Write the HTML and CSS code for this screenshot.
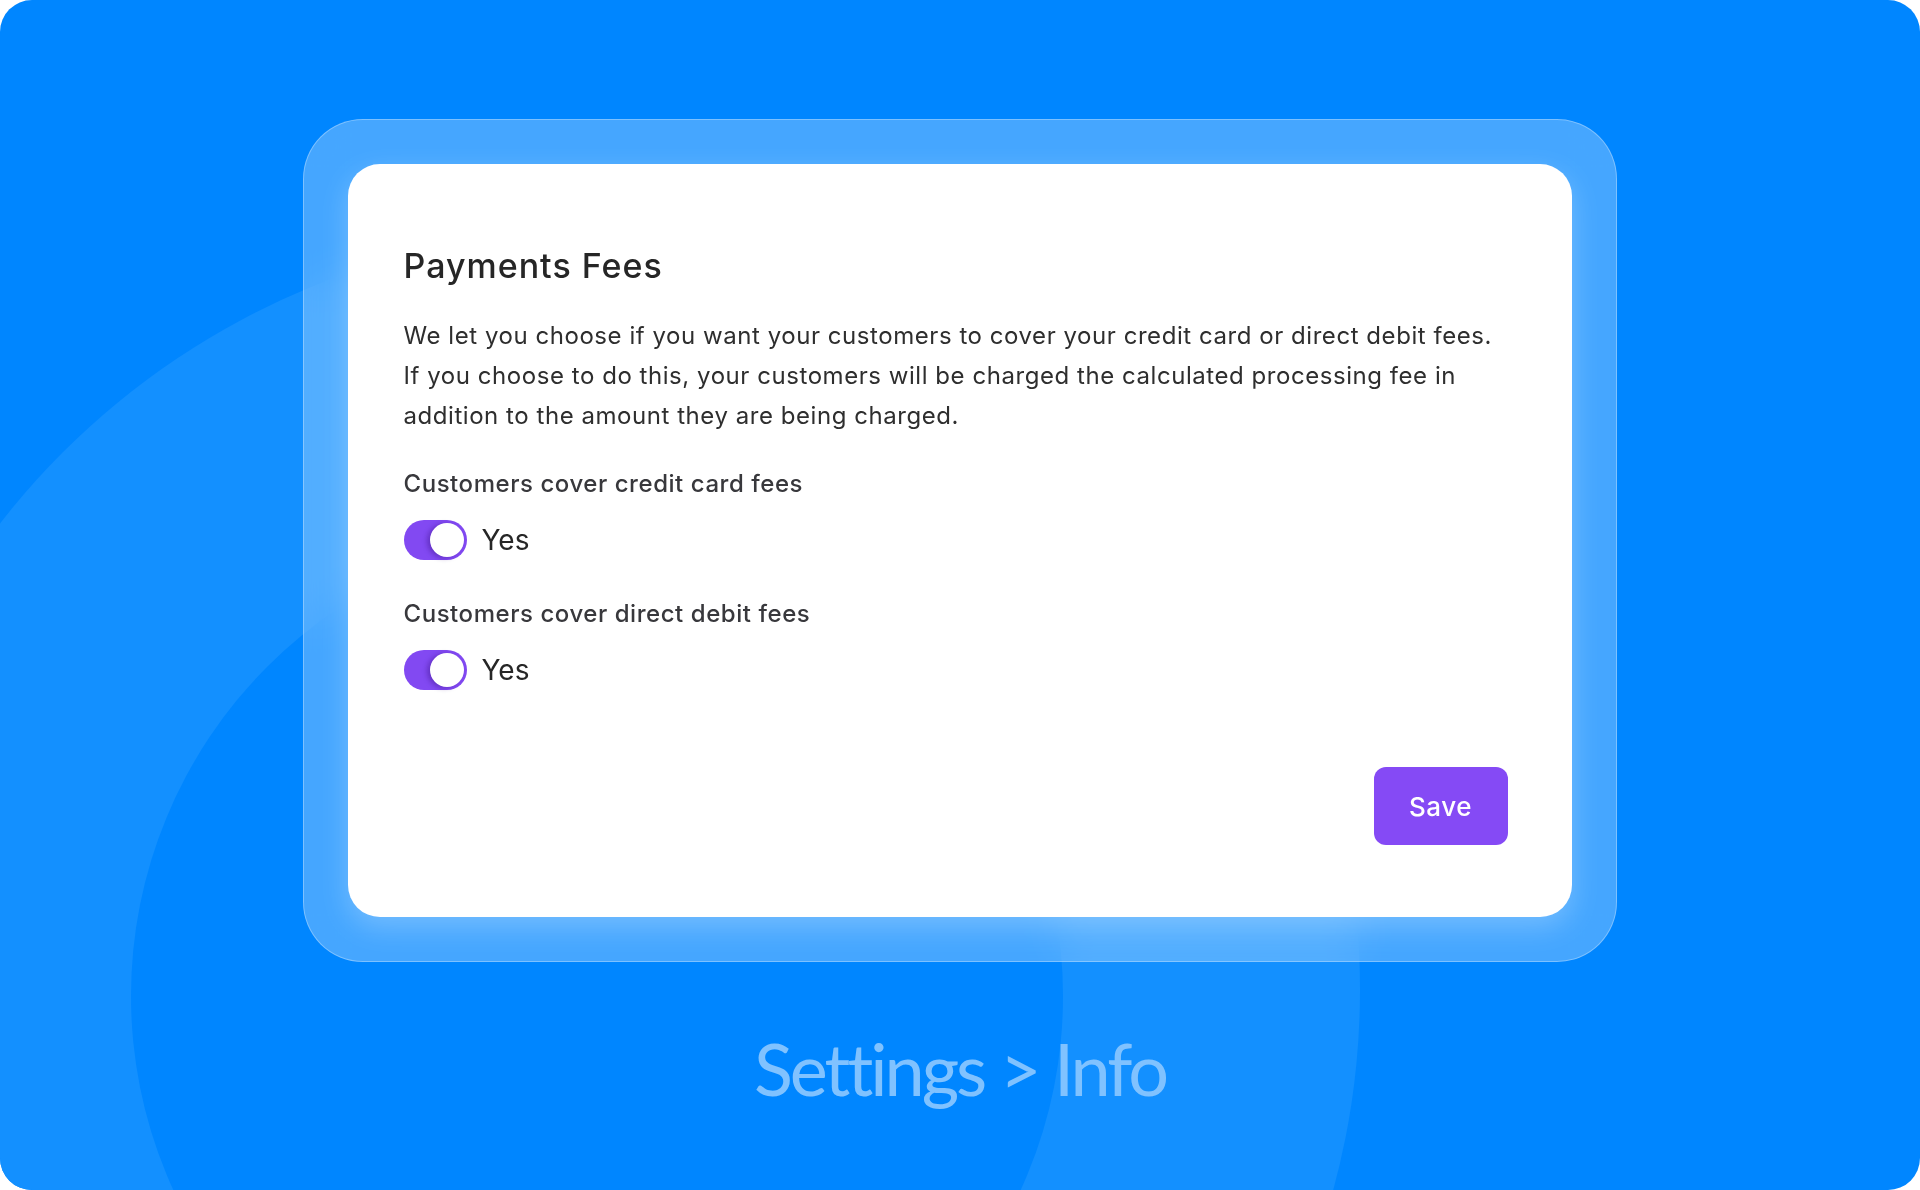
FILE: index.html
```html
<!DOCTYPE html>
<html lang="en">
<head>
    <meta charset="UTF-8">
    <meta name="viewport" content="width=device-width, initial-scale=1.0">
    <title>Payments Fees</title>
    <link rel="stylesheet" href="styles.css">
</head>
<body>

    <div class="frame">
        <!-- background rings -->
        <div class="ring-outer"></div>
        <div class="ring-inner"></div>

        <div class="panel">
            <div class="card">
                <h2>Payments Fees</h2>
                <p class="intro">We let you choose if you want your customers to cover your credit card or direct debit fees. If you choose to do this, your customers will be charged the calculated processing fee in addition to the amount they are being charged.</p>

                <div class="field">
                    <div class="label">Customers cover credit card fees</div>
                    <div class="switch-row">
                        <span class="switch on"><span class="knob"></span></span>
                        <span class="switch-text">Yes</span>
                    </div>
                </div>

                <div class="field">
                    <div class="label">Customers cover direct debit fees</div>
                    <div class="switch-row">
                        <span class="switch on"><span class="knob"></span></span>
                        <span class="switch-text">Yes</span>
                    </div>
                </div>

                <div class="actions">
                    <button class="save-btn">Save</button>
                </div>
            </div>
        </div>

        <div class="caption">Settings &gt; Info</div>
    </div>

</body>
</html>
```

FILE: styles.css
```css
body {
    margin: 0;
    background-color: #fff;
    font-family: Inter, "Noto Sans", sans-serif;
}

.frame {
    position: relative;
    width: 1920px;
    height: 1190px;
    border-radius: 32px;
    background-color: #0086ff;
    overflow: hidden;
    display: flex;
    flex-direction: column;
    align-items: center;
}

/* Decorative rings */
.ring-outer {
    position: absolute;
    left: -160px;
    top: 230px;
    width: 1520px;
    height: 1520px;
    border-radius: 50%;
    background-color: #1390ff;
}

.ring-inner {
    position: absolute;
    left: 131px;
    top: 530px;
    width: 932px;
    height: 932px;
    border-radius: 50%;
    background-color: #0086ff;
}

.panel {
    position: relative;
    margin-top: 119px;
    margin-left: -1px;
    width: 1224px;
    padding: 44px;
    border-radius: 60px;
    background-color: rgba(255, 255, 255, 0.27);
    border: 1px solid rgba(255, 255, 255, 0.3);
    backdrop-filter: blur(20px);
}

.card {
    background-color: #fff;
    border-radius: 32px;
    padding: 82px 64px 72px 56px;
    box-shadow: 0 10px 28px rgba(255, 255, 255, 0.25);
    color: #2b2b2b;
}

h2 {
    margin: 0 0 30px;
    font-size: 34px;
    line-height: 40px;
    font-weight: 500;
    letter-spacing: 1px;
    color: #262626;
}

.intro {
    margin: 0 0 32px;
    font-size: 24px;
    line-height: 40px;
    letter-spacing: 0.55px;
    color: #2e2e2e;
}

.field {
    margin-bottom: 38px;
}

.label {
    font-size: 24px;
    line-height: 32px;
    font-weight: 500;
    letter-spacing: 0.55px;
    color: #38383c;
    margin-bottom: 20px;
}

.switch-row {
    display: flex;
    align-items: center;
    gap: 15px;
}

.switch {
    position: relative;
    width: 63px;
    height: 40px;
    border-radius: 20px;
    background-color: #e2e2e8;
}

.switch.on {
    background-color: #8249f2;
}

.knob {
    position: absolute;
    top: 3px;
    left: 3px;
    width: 34px;
    height: 34px;
    border-radius: 50%;
    background-color: #fff;
}

.switch.on .knob {
    left: auto;
    right: 3px;
    box-shadow: -3px 1px 5px rgba(55, 15, 130, 0.4);
}

.switch-text {
    font-size: 28px;
    line-height: 40px;
    color: #262626;
}

.actions {
    display: flex;
    justify-content: flex-end;
    margin-top: 77px;
}

.save-btn {
    width: 134px;
    height: 78px;
    border: none;
    border-radius: 12px;
    background-color: #854af5;
    color: #fff;
    font-family: Inter, "Noto Sans", sans-serif;
    font-size: 26px;
    font-weight: 500;
    letter-spacing: 0.5px;
    cursor: pointer;
}

.caption {
    position: relative;
    margin-top: 70px;
    font-family: Lato, sans-serif;
    font-size: 72px;
    line-height: 72px;
    letter-spacing: -3px;
    color: #80c2ff;
}
```
